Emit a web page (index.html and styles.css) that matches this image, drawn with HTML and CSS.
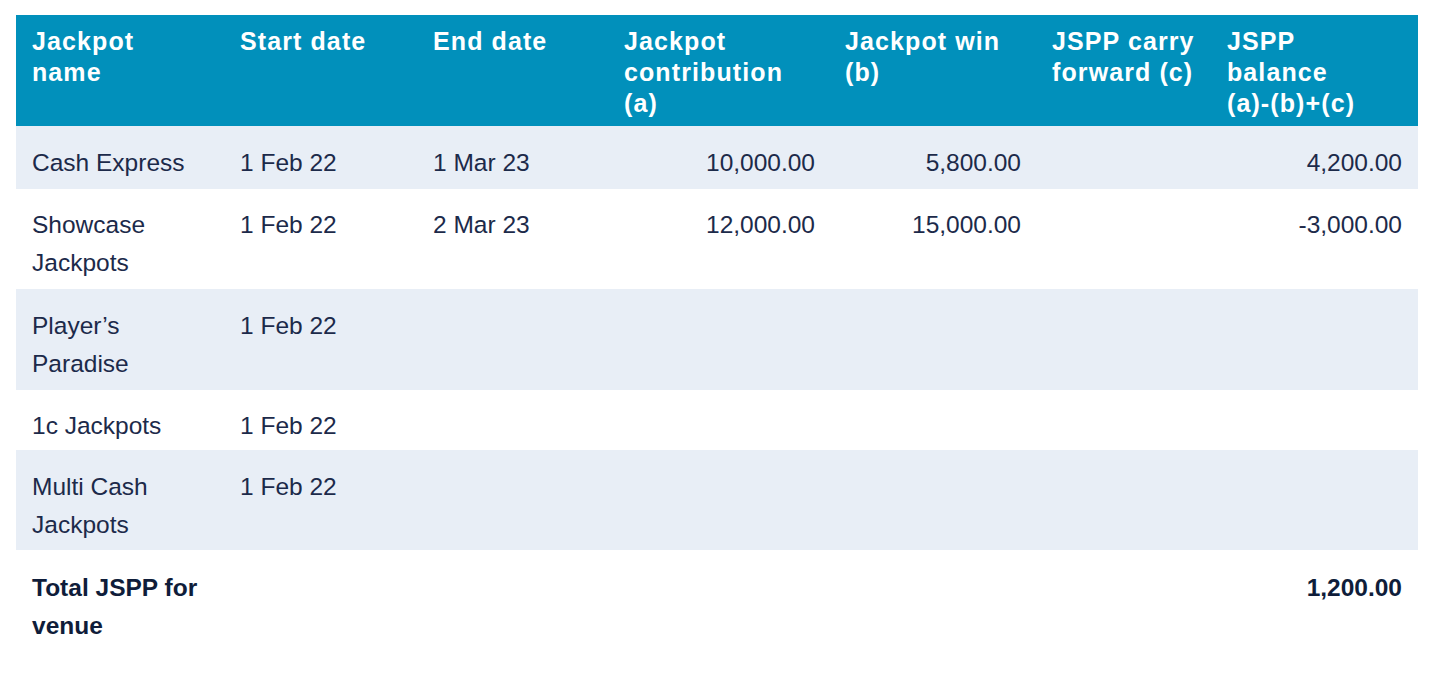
FILE: index.html
```html
<!DOCTYPE html>
<html lang="en">
<head>
<meta charset="utf-8">
<title>JSPP table</title>
<link rel="stylesheet" href="styles.css">
</head>
<body>
<div class="page">
  <table class="jspp">
    <colgroup>
      <col class="c1"><col class="c2"><col class="c3"><col class="c4"><col class="c5"><col class="c6"><col class="c7">
    </colgroup>
    <thead>
      <tr>
        <th>Jackpot<br>name</th>
        <th>Start date</th>
        <th>End date</th>
        <th>Jackpot<br>contribution<br>(a)</th>
        <th>Jackpot win<br>(b)</th>
        <th>JSPP carry<br>forward (c)</th>
        <th>JSPP<br>balance<br>(a)-(b)+(c)</th>
      </tr>
    </thead>
    <tbody>
      <tr class="alt r1">
        <td>Cash Express</td><td>1 Feb 22</td><td>1 Mar 23</td>
        <td class="num">10,000.00</td><td class="num">5,800.00</td><td></td><td class="num">4,200.00</td>
      </tr>
      <tr class="r2">
        <td>Showcase<br>Jackpots</td><td>1 Feb 22</td><td>2 Mar 23</td>
        <td class="num">12,000.00</td><td class="num">15,000.00</td><td></td><td class="num">-3,000.00</td>
      </tr>
      <tr class="alt r3">
        <td>Player’s<br>Paradise</td><td>1 Feb 22</td><td></td><td></td><td></td><td></td><td></td>
      </tr>
      <tr class="r4">
        <td>1c Jackpots</td><td>1 Feb 22</td><td></td><td></td><td></td><td></td><td></td>
      </tr>
      <tr class="alt r5">
        <td>Multi Cash<br>Jackpots</td><td>1 Feb 22</td><td></td><td></td><td></td><td></td><td></td>
      </tr>
      <tr class="total">
        <td>Total JSPP for<br>venue</td><td></td><td></td><td></td><td></td><td></td><td class="num">1,200.00</td>
      </tr>
    </tbody>
  </table>
</div>
</body>
</html>
```

FILE: styles.css
```css
html, body {
  margin: 0;
  padding: 0;
  background: #ffffff;
}

.page {
  padding: 15px 22px 0 16px;
  font-family: "Liberation Sans", Arial, sans-serif;
}

.jspp {
  width: 1402px;
  border-collapse: collapse;
  table-layout: fixed;
  font-size: 24.5px;
  color: #1c2a4a;
}

.c1 { width: 208px; }
.c2 { width: 193px; }
.c3 { width: 191px; }
.c4 { width: 221px; }
.c5 { width: 207px; }
.c6 { width: 175px; }
.c7 { width: 207px; }

.jspp th {
  background: #0190bb;
  color: #ffffff;
  font-weight: bold;
  font-size: 25px;
  text-align: left;
  vertical-align: top;
  line-height: 31px;
  letter-spacing: 1.1px;
  padding: 11px 15px 7px 16px;
}

.jspp td {
  vertical-align: top;
  line-height: 38px;
  padding: 17px 15px 7px 16px;
  text-align: left;
}

.jspp td.num {
  text-align: right;
}

.jspp td:last-child {
  padding-right: 16px;
}

.jspp td:nth-child(4) {
  padding-right: 14px;
}

.jspp tr.alt td {
  background: #e8eef6;
}

.jspp tr.r1 td { padding-top: 18px; padding-bottom: 7px; }
.jspp tr.r2 td { padding-top: 17px; padding-bottom: 7px; }
.jspp tr.r3 td { padding-top: 18px; padding-bottom: 7px; }
.jspp tr.r4 td { padding-top: 17px; padding-bottom: 5px; }
.jspp tr.r5 td { padding-top: 18px; padding-bottom: 6px; }

.jspp tr.total td {
  font-weight: bold;
  color: #0f1d3a;
  padding-top: 19px;
}
```
